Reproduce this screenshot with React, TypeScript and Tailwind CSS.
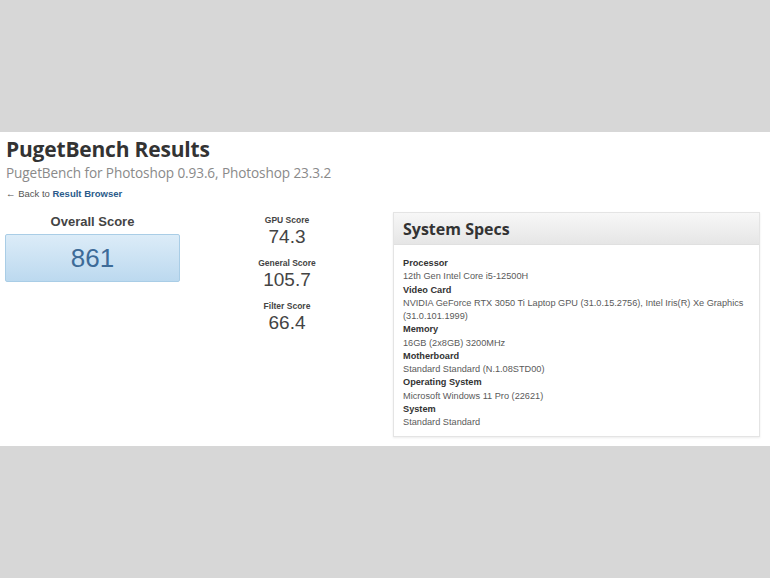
import React from "react";

const specs = [
  { label: "Processor", value: "12th Gen Intel Core i5-12500H" },
  {
    label: "Video Card",
    value:
      "NVIDIA GeForce RTX 3050 Ti Laptop GPU (31.0.15.2756), Intel Iris(R) Xe Graphics (31.0.101.1999)",
  },
  { label: "Memory", value: "16GB (2x8GB) 3200MHz" },
  { label: "Motherboard", value: "Standard Standard (N.1.08STD00)" },
  { label: "Operating System", value: "Microsoft Windows 11 Pro (22621)" },
  { label: "System", value: "Standard Standard" },
];

const subScores = [
  { label: "GPU Score", value: "74.3" },
  { label: "General Score", value: "105.7" },
  { label: "Filter Score", value: "66.4" },
];

const App = () => {
  return (
    <div className="w-[770px] h-[578px] bg-[#d7d7d7] flex flex-col justify-center">
      <div className="bg-white h-[314px] px-[6px] pt-[3px] font-['Liberation_Sans',sans-serif]">
        <div className="text-[21px] leading-[28px] font-bold text-[#333] font-['Open_Sans',sans-serif] tracking-[-0.2px]">
          PugetBench Results
        </div>
        <div className="text-[13.6px] leading-[20px] text-[#8a8a8a] font-['Open_Sans',sans-serif] tracking-[-0.1px]">
          PugetBench for Photoshop 0.93.6, Photoshop 23.3.2
        </div>
        <div className="text-[9.5px] leading-[14px] mt-[4px] text-[#555]">
          ← Back to <span className="font-bold text-[#2a5a8a]">Result Browser</span>
        </div>

        <div className="flex mt-[6px]">
          {/* overall */}
          <div className="w-[175px] ml-[-1px] pt-[8px] flex flex-col items-center">
            <div className="text-[13px] leading-[14px] font-bold text-[#444]">Overall Score</div>
            <div className="mt-[5px] w-full h-[48px] rounded-[2px] border border-[#a9cde6] bg-gradient-to-b from-[#dcecf8] to-[#bcd9ef] flex items-center justify-center">
              <span className="text-[26px] text-[#3d6b98]">861</span>
            </div>
          </div>

          {/* sub scores */}
          <div className="w-[214px] flex flex-col items-center pt-[8px]">
            {subScores.map((s) => (
              <div key={s.label} className="flex flex-col items-center mb-[9px]">
                <div className="text-[8.5px] leading-[10px] font-bold text-[#444]">{s.label}</div>
                <div className="text-[19px] leading-[24px] text-[#444]">{s.value}</div>
              </div>
            ))}
          </div>

          {/* specs */}
          <div className="w-[367px] ml-[-1px] mt-[5px] self-start border border-[#e4e4e4] shadow-[0_1px_2px_rgba(0,0,0,0.08)]">
            <div className="h-[32px] bg-gradient-to-b from-[#f7f7f7] to-[#e6e6e6] px-[9px] flex items-center border-b border-[#e0e0e0]">
              <span className="text-[16px] font-bold text-[#333] font-['Open_Sans',sans-serif]">System Specs</span>
            </div>
            <div className="px-[9px] pt-[12px] pb-[7px] text-[9.2px] leading-[13.25px]">
              {specs.map((s) => (
                <div key={s.label}>
                  <div className="font-bold text-[#333]">{s.label}</div>
                  <div className="text-[#5a5a5a]">{s.value}</div>
                </div>
              ))}
            </div>
          </div>
        </div>
      </div>
    </div>
  );
};

export default App;
